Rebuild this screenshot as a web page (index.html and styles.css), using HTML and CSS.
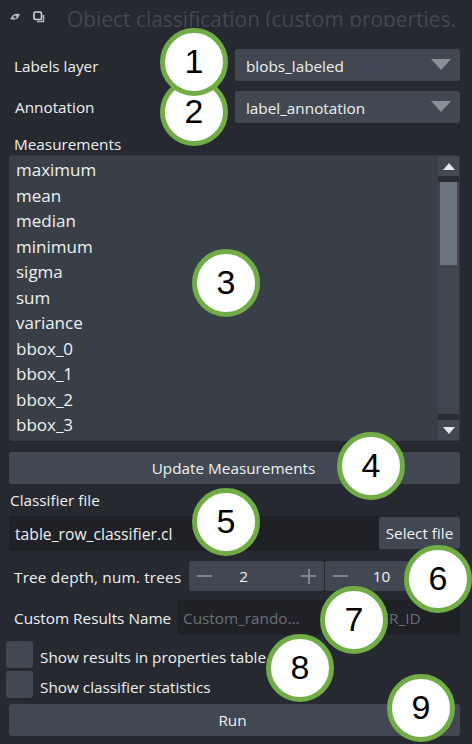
FILE: index.html
```html
<!DOCTYPE html>
<html lang="en">
<head>
<meta charset="utf-8">
<title>Object classification</title>
<link rel="stylesheet" href="styles.css">
</head>
<body>
<main class="panel">
  <header class="titlebar">
    <svg class="tb-icon" width="12" height="10" viewBox="0 0 12 10"><path d="M1 7 L4 3 Q7 1 11 2 L9 6 Q6 9 1 7Z" fill="#b8bcc0"/><circle cx="6" cy="5" r="1.6" fill="#3a3f46"/></svg>
    <svg class="tb-icon tb-float" width="12" height="12" viewBox="0 0 12 12"><rect x="1" y="1" width="7.500" height="7.500" rx="1.500" fill="none" stroke="#d4d6d8" stroke-width="1.600"/><path d="M10.500 4 V10.500 H4" fill="none" stroke="#b0b4b8" stroke-width="1.600"/></svg>
    <div class="title-clip"><span class="title">Object classification (custom properties.</span></div>
  </header>

  <div class="row-combo first">
    <label class="lbl">Labels layer</label>
    <div class="combo"><span>blobs_labeled</span><i class="caret"></i></div>
  </div>
  <div class="row-combo second">
    <label class="lbl">Annotation</label>
    <div class="combo"><span>label_annotation</span><i class="caret"></i></div>
  </div>

  <div class="lbl section measurements-label">Measurements</div>
  <div class="list">
    <ul class="items">
      <li>maximum</li><li>mean</li><li>median</li><li>minimum</li><li>sigma</li><li>sum</li><li>variance</li><li>bbox_0</li><li>bbox_1</li><li>bbox_2</li><li>bbox_3</li>
    </ul>
    <div class="scrollbar">
      <div class="sb-btn"><i class="sb-up"></i></div>
      <div class="sb-track"><div class="sb-handle"></div></div>
      <div class="sb-btn sb-btn-down"><i class="sb-down"></i></div>
    </div>
  </div>
  <button class="btn update">Update Measurements</button>

  <div class="lbl section file-label">Classifier file</div>
  <div class="file-row">
    <div class="field file-field">table_row_classifier.cl</div>
    <button class="btn select">Select file</button>
  </div>

  <div class="spin-row">
    <label class="lbl">Tree depth, num. trees</label>
    <div class="spin"><i class="minus"></i><span class="val">2</span><i class="plus"></i></div>
    <div class="spin"><i class="minus"></i><span class="val">10</span><i class="plus"></i></div>
  </div>

  <div class="name-row">
    <label class="lbl">Custom Results Name</label>
    <div class="names">
      <div class="ph ph-a">Custom_rando...</div>
      <div class="ph ph-b">CLUSTER_ID</div>
    </div>
  </div>

  <div class="check first-check"><i class="box"></i><span class="lbl">Show results in properties table</span></div>
  <div class="check"><i class="box"></i><span class="lbl">Show classifier statistics</span></div>
  <button class="btn run">Run</button>

  <span class="mark m2">2</span>
  <span class="mark m1">1</span>
  <span class="mark m3">3</span>
  <span class="mark m4">4</span>
  <span class="mark m5">5</span>
  <span class="mark m6">6</span>
  <span class="mark m7">7</span>
  <span class="mark m8">8</span>
  <span class="mark m9">9</span>
</main>
</body>
</html>
```

FILE: styles.css
```css
* { box-sizing: border-box; }
html, body { margin: 0; padding: 0; }
body {
  width: 472px;
  height: 744px;
  overflow: hidden;
  background: #262930;
  color: #f0f1f2;
  font-family: "Open Sans", "Noto Sans", sans-serif;
  font-size: 15.3px;
}
.panel {
  position: relative;
  width: 472px;
  height: 744px;
  padding: 0 12px 0 9px;
  display: flex;
  flex-direction: column;
}
.titlebar {
  height: 27px;
  margin: 0 0 22px 0;
  display: flex;
  align-items: flex-start;
}
.tb-icon { margin: 12px 0 0 0; flex: none; }
.tb-float { margin-left: 12px; margin-top: 11px; }
.title-clip {
  margin-left: 22px;
  height: 27px;
  overflow: hidden;
  flex: 1;
}
.title {
  display: block;
  font-size: 20.9px;
  line-height: 39px;
  color: #414851;
  white-space: nowrap;
}
.lbl { white-space: nowrap; color: #f0f1f2; line-height: 20px; }
.row-combo { display: flex; align-items: center; height: 32px; padding-left: 5px; }
.row-combo .lbl { width: 221px; padding-top: 2px; }
.row-combo.second { margin-top: 10px; }
.row-combo.second .lbl { padding-left: 1px; padding-top: 0; }
.combo {
  flex: 1;
  height: 32px;
  background: #414851;
  border-radius: 3px;
  padding: 1px 9px 0 11px;
  display: flex;
  align-items: center;
  justify-content: space-between;
}
.caret {
  width: 0; height: 0;
  border-left: 10px solid transparent;
  border-right: 10px solid transparent;
  border-top: 11px solid #8b9098;
  margin-top: -3px;
}
.section { padding-left: 5px; height: 20px; }
.measurements-label { margin-top: 11px; margin-bottom: 1px; }
.list {
  height: 286px;
  background: #383f47;
  border-radius: 3px;
  display: flex;
  overflow: hidden;
  border: 1px solid #343a42;
}
.items {
  flex: 1;
  list-style: none;
  margin: 0;
  padding: 1px 0 0 6px;
  font-size: 17px;
}
.items li { height: 25.5px; line-height: 25.5px; }
.scrollbar {
  width: 21px;
  display: flex;
  flex-direction: column;
  background: #3f464f;
}
.sb-btn { height: 20px; display: flex; align-items: center; justify-content: center; background: #414851; }
.sb-up { width: 0; height: 0; border-left: 6px solid transparent; border-right: 6px solid transparent; border-bottom: 7px solid #e4e6e8; }
.sb-down { width: 0; height: 0; border-left: 6px solid transparent; border-right: 6px solid transparent; border-top: 7px solid #e4e6e8; }
.sb-track { flex: 1; display: flex; flex-direction: column; border-top: 6px solid #2a2d33; border-bottom: 6px solid #2a2d33; background: #3f464f; }
.sb-handle { width: 17px; height: 83px; margin: 0 auto; background: #6a7580; }
.btn {
  font: inherit;
  color: #f0f1f2;
  border: 0;
  background: #414851;
  border-radius: 3px;
  padding: 0;
  display: block;
}
.update { height: 32px; margin-top: 11px; flex: none; padding-right: 2px; }
.section.file-label { margin-top: 6px; margin-bottom: 6px; padding-left: 1px; }
.file-row { display: flex; align-items: center; height: 35px; }
.field { background: #1f2126; }
.file-field {
  width: 370px;
  height: 35px;
  line-height: 36px;
  padding-left: 6px;
  border-radius: 3px;
  font-size: 15.7px;
}
.select { flex: 1; height: 32px; margin-top: -1px; }
.spin-row { display: flex; align-items: center; height: 30px; margin-top: 10px; padding-left: 5px; }
.spin-row .lbl { width: 175px; letter-spacing: .2px; padding-top: 1px; }
.spin {
  width: 135px;
  height: 30px;
  background: #414851;
  border-radius: 3px;
  display: flex;
  align-items: center;
  justify-content: space-between;
  padding: 0 8px;
  flex: none;
}
.spin + .spin { margin-left: 1px; }
.spin + .spin .val { padding-right: 22px; }
.minus, .plus { position: relative; width: 15px; height: 2px; background: #7c838c; flex: none; }
.plus::after {
  content: "";
  position: absolute;
  left: 6.500px;
  top: -6.500px;
  width: 2px;
  height: 15px;
  background: #7c838c;
}
.val { flex: 1; text-align: center; padding-right: 26px; }
.name-row { display: flex; align-items: center; height: 35px; margin-top: 9px; padding-left: 5px; }
.name-row .lbl { width: 163px; padding-top: 1px; }
.names {
  flex: 1;
  height: 35px;
  display: flex;
  background: #1f2126;
  border-radius: 3px;
  color: #6a7078;
  line-height: 36px;
}
.ph { padding-left: 6px; white-space: nowrap; }
.ph-a { width: 148px; }
.ph-b { flex: 1; padding-left: 10px; }
.check { display: flex; align-items: center; height: 27px; margin-left: -3px; }
.check .lbl { padding-top: 4px; margin-left: 1px; }
.first-check { margin-top: 6px; margin-bottom: 3px; }
.box { width: 27px; height: 27px; background: #414851; border-radius: 3px; margin-right: 6px; flex: none; }
.run { height: 32px; margin-top: 6px; flex: none; padding-right: 4px; }
.mark {
  position: absolute;
  width: 68px;
  height: 68px;
  border-radius: 50%;
  background: #fff;
  border: 5.500px solid #70ad47;
  color: #000;
  font-family: "Liberation Sans", "Open Sans", sans-serif;
  font-size: 34px;
  line-height: 57px;
  text-align: center;
}
.m1 { left: 160px; top: 28px; }
.m2 { left: 160px; top: 78px; }
.m3 { left: 192px; top: 249px; }
.m4 { left: 337px; top: 432px; }
.m5 { left: 192px; top: 488px; }
.m6 { left: 404px; top: 545px; }
.m7 { left: 320px; top: 586px; }
.m8 { left: 266px; top: 634px; }
.m9 { left: 387px; top: 674px; }
```
